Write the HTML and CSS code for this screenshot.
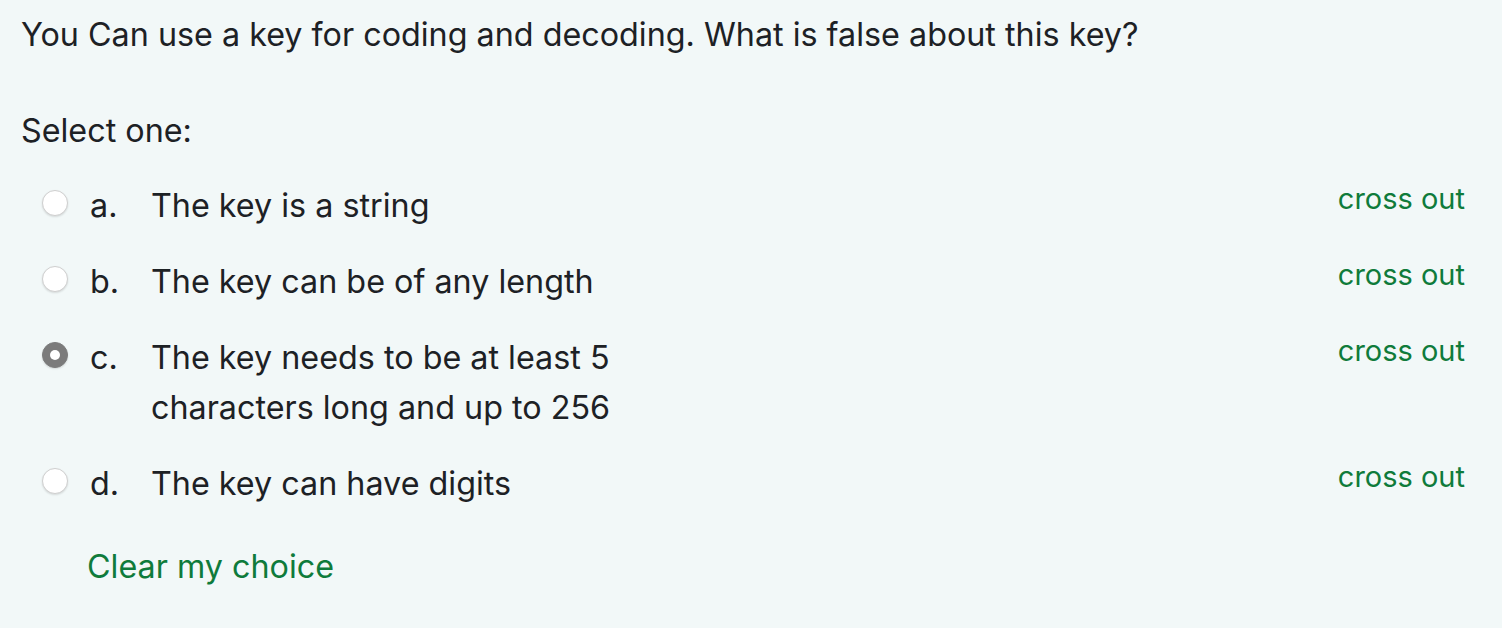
FILE: index.html
```html
<!DOCTYPE html>
<html>
<head>
<meta charset="utf-8">
<link rel="stylesheet" href="styles.css">
</head>
<body>
<div class="que">
  <div class="qtext">You Can use a key for coding and decoding. What is false about this key?</div>
  <div class="prompt">Select one:</div>
  <div class="answers">
    <div class="row">
      <span class="radio"></span>
      <span class="letter">a.</span>
      <span class="text">The key is a string</span>
      <a class="cross">cross out</a>
    </div>
    <div class="row">
      <span class="radio"></span>
      <span class="letter">b.</span>
      <span class="text">The key can be of any length</span>
      <a class="cross">cross out</a>
    </div>
    <div class="row">
      <span class="radio checked"></span>
      <span class="letter">c.</span>
      <span class="text">The key needs to be at least 5 characters long and up to 256</span>
      <a class="cross">cross out</a>
    </div>
    <div class="row">
      <span class="radio"></span>
      <span class="letter">d.</span>
      <span class="text">The key can have digits</span>
      <a class="cross">cross out</a>
    </div>
  </div>
  <a class="clear">Clear my choice</a>
</div>
</body>
</html>
```
FILE: styles.css
```css
html, body {
  margin: 0;
  padding: 0;
  background: #f2f8f8;
}
body {
  font-family: Inter, "Noto Sans", sans-serif;
  color: #1d2125;
  font-size: 32.3px;
  width: 1502px;
  height: 628px;
  overflow: hidden;
}
.que {
  padding: 10px 37px 0 21px;
}
.qtext {
  line-height: 50px;
}
.prompt {
  margin-top: 46px;
  line-height: 50px;
}
.answers {
  margin-top: 25px;
  padding-left: 21px;
}
.row {
  display: flex;
  align-items: flex-start;
  margin-bottom: 26px;
}
.radio {
  flex: none;
  width: 26px;
  height: 26px;
  border-radius: 50%;
  background: #fff;
  border: 1px solid #cfcfcf;
  box-shadow: 0 1px 2px rgba(0,0,0,0.12);
  margin-top: 9px;
  margin-right: 22px;
  box-sizing: border-box;
  position: relative;
}
.radio.checked {
  background: #7b7b7b;
  border: 1px solid #7b7b7b;
}
.radio.checked::after {
  content: "";
  position: absolute;
  left: 7px; top: 7px;
  width: 10px; height: 10px;
  border-radius: 50%;
  background: #fff;
}
.letter {
  flex: none;
  width: 61px;
  line-height: 50px;
}
.text {
  width: 480px;
  line-height: 50px;
}
.cross {
  margin-left: auto;
  color: #0f7b3b;
  font-size: 29px;
  line-height: 36px;
}
.clear {
  display: block;
  margin-left: 66px;
  margin-top: 33px;
  color: #0f7b3b;
  line-height: 50px;
}
```
